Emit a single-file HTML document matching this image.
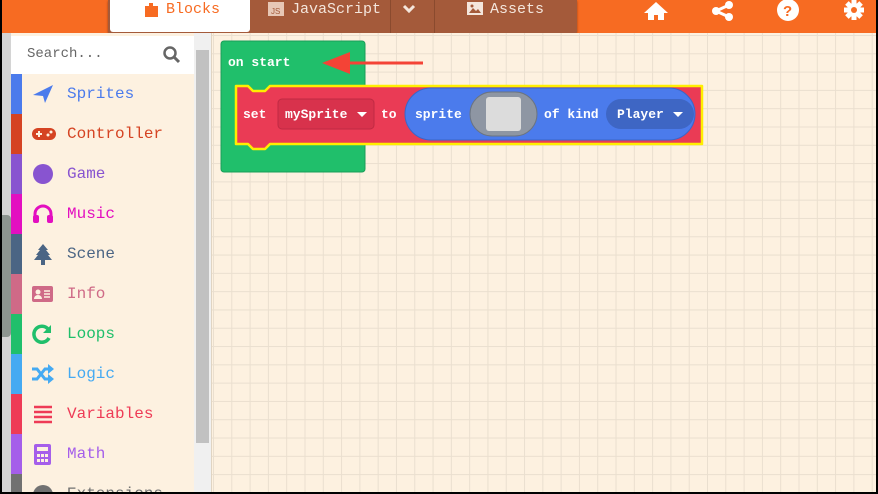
<!DOCTYPE html>
<html><head><meta charset="utf-8"><style>
*{margin:0;padding:0;box-sizing:border-box}
html,body{width:878px;height:494px;overflow:hidden}
body{background:#000;font-family:"Liberation Mono",monospace;position:relative}
.top{position:absolute;left:2px;top:0;width:874px;height:33px;background:#f76b22}
.tabs{position:absolute;left:108px;top:0;width:469px;height:34px;background:#a45a3a;border-radius:0 0 3px 3px;box-shadow:0 1px 2px rgba(0,0,0,.4)}
.blk{position:absolute;left:110px;top:0;width:140px;height:32px;background:#fff;border-radius:0 0 3px 3px;color:#f76b22;font-size:15px;line-height:20px;padding-left:56px}
.tab{position:absolute;top:0;color:#f4e6dc;font-size:15px;line-height:20px}
.div{position:absolute;top:0;width:1px;height:33px;background:#8a4a2e}
.left{position:absolute;left:2px;top:33px;width:9px;height:459px;background:#d4d4d4}
.handle{position:absolute;left:2px;top:215px;width:9px;height:122px;background:#8d9590;border-radius:0 4px 4px 0}
.tb{position:absolute;left:11px;top:33px;width:184px;height:459px;background:#fdf1e0}
.search{position:absolute;left:11px;top:36px;width:184px;height:38px;background:#fff;color:#666;font-size:14px;line-height:36px;padding-left:16px}
.cat{position:absolute;left:11px;width:184px;height:40px;font-size:16px;line-height:40px}
.cat .s{position:absolute;left:0;top:0;width:11px;height:40px}
.cat .t{position:absolute;left:56px}
.cat svg{position:absolute;left:21px;top:10px}
.track{position:absolute;left:194px;top:33px;width:17px;height:459px;background:#f0f0f0}
.thumb{position:absolute;left:196px;top:50px;width:13px;height:393px;background:#c1c1c1}
.ws{position:absolute;left:211px;top:33px;width:665px;height:459px;background-color:#fdf1e0;
background-image:linear-gradient(90deg,#eadfcf 1px,transparent 1px),linear-gradient(#eadfcf 1px,transparent 1px);background-size:18.3px 18.3px;background-position:1px 2px;border-left:1px solid #e0d4c2}
.w{color:#fff;font-weight:bold;font-size:13px;position:absolute}
</style></head><body>
<div class="top"></div>
<div class="tabs"></div>
<div class="blk"><svg style="position:absolute;left:35px;top:3px" width="13" height="14"><path d="M0 3h4V0h4v3h5v11H0z" fill="#f76b22"/></svg>Blocks</div>
<svg style="position:absolute;left:268px;top:2px" width="16" height="14"><rect width="16" height="14" fill="#e7c7b5"/><text x="3" y="12" font-size="8" fill="#a45a3a" font-family="Liberation Sans">JS</text></svg>
<div class="tab" style="left:291px">JavaScript</div>
<div class="div" style="left:390px"></div>
<svg style="position:absolute;left:402px;top:4px" width="14" height="10"><path d="M2 2l5 5 5-5" stroke="#f4e6dc" stroke-width="3" fill="none"/></svg>
<div class="div" style="left:434px"></div>
<svg style="position:absolute;left:467px;top:2px" width="16" height="13"><rect width="16" height="13" fill="#f4e6dc"/><path d="M2 11l4-5 3 3 2-2 3 4z" fill="#a45a3a"/><circle cx="5" cy="4" r="1.5" fill="#a45a3a"/></svg>
<div class="tab" style="left:490px">Assets</div>
<svg style="position:absolute;left:643px;top:1px" width="26" height="20"><path d="M13 1L1 12h4v7h6v-5h4v5h6v-7h4z" fill="#fff"/></svg>
<svg style="position:absolute;left:711px;top:1px" width="24" height="20"><circle cx="18" cy="4" r="4" fill="#fff"/><circle cx="5" cy="10" r="4" fill="#fff"/><circle cx="18" cy="16" r="4" fill="#fff"/><path d="M5 10L18 4M5 10l13 6" stroke="#fff" stroke-width="3"/></svg>
<svg style="position:absolute;left:776px;top:0px" width="24" height="22"><circle cx="12" cy="10" r="11" fill="#fff"/><text x="7" y="16" font-size="15" font-weight="bold" fill="#f76b22" font-family="Liberation Sans">?</text></svg>
<svg style="position:absolute;left:842px;top:0px" width="24" height="22"><g fill="#fff" transform="translate(12 10)"><rect x="-2.5" y="-10" width="5" height="20"/><rect x="-2.5" y="-10" width="5" height="20" transform="rotate(45)"/><rect x="-2.5" y="-10" width="5" height="20" transform="rotate(90)"/><rect x="-2.5" y="-10" width="5" height="20" transform="rotate(135)"/><circle r="7"/><circle r="3" fill="#f76b22"/></g></svg>

<div class="left"></div><div class="handle"></div>
<div class="tb"></div>
<div class="search">Search...<svg style="position:absolute;left:152px;top:10px" width="18" height="18"><circle cx="7" cy="7" r="5.5" stroke="#666" stroke-width="2.5" fill="none"/><path d="M11 11l5 5" stroke="#666" stroke-width="3"/></svg></div>

<div class="cat" style="top:74px;color:#4b7bec"><div class="s" style="background:#4b7bec"></div><svg width="22" height="20"><path d="M1 11L21 1 13 19 11 12z" fill="#4b7bec"/></svg><span class="t">Sprites</span></div>
<div class="cat" style="top:114px;color:#d54322"><div class="s" style="background:#d54322"></div><svg width="24" height="20"><rect x="0" y="4" width="24" height="12" rx="6" fill="#d54322"/><path d="M4 10h6M7 7v6" stroke="#fdf1e0" stroke-width="2"/><circle cx="16" cy="11" r="1.5" fill="#fdf1e0"/><circle cx="19" cy="8" r="1.5" fill="#fdf1e0"/></svg><span class="t">Controller</span></div>
<div class="cat" style="top:154px;color:#8854d0"><div class="s" style="background:#8854d0"></div><svg width="22" height="20"><circle cx="11" cy="10" r="10" fill="#8854d0"/></svg><span class="t">Game</span></div>
<div class="cat" style="top:194px;color:#e30fc0"><div class="s" style="background:#e30fc0"></div><svg width="22" height="20"><path d="M3 15v-5a8 8 0 0116 0v5" stroke="#e30fc0" stroke-width="3" fill="none"/><rect x="1" y="11" width="6" height="8" rx="2" fill="#e30fc0"/><rect x="15" y="11" width="6" height="8" rx="2" fill="#e30fc0"/></svg><span class="t">Music</span></div>
<div class="cat" style="top:234px;color:#4b6584"><div class="s" style="background:#4b6584"></div><svg width="22" height="22"><path d="M11 0l5 6h-2l4 5h-2l4 5H2l4-5H4l4-5H6z" fill="#4b6584"/><rect x="9" y="16" width="4" height="5" fill="#4b6584"/></svg><span class="t">Scene</span></div>
<div class="cat" style="top:274px;color:#cf6a87"><div class="s" style="background:#cf6a87"></div><svg width="22" height="20"><rect x="0" y="2" width="21" height="16" rx="2" fill="#cf6a87"/><circle cx="6" cy="8" r="2.5" fill="#fdf1e0"/><path d="M2 15a4 4 0 018 0z" fill="#fdf1e0"/><path d="M12 7h6M12 10h6M12 13h6" stroke="#fdf1e0" stroke-width="1.5"/></svg><span class="t">Info</span></div>
<div class="cat" style="top:314px;color:#20bf6b"><div class="s" style="background:#20bf6b"></div><svg width="22" height="22"><path d="M17 14a8 8 0 11-1-9" stroke="#20bf6b" stroke-width="3.5" fill="none"/><path d="M19 1v8h-8z" fill="#20bf6b"/></svg><span class="t">Loops</span></div>
<div class="cat" style="top:354px;color:#45aaf2"><div class="s" style="background:#45aaf2"></div><svg width="22" height="20"><path d="M0 5h5l8 10h4M0 15h5l8-10h4" stroke="#45aaf2" stroke-width="3" fill="none"/><path d="M16 0l6 5-6 5zM16 10l6 5-6 5z" fill="#45aaf2"/></svg><span class="t">Logic</span></div>
<div class="cat" style="top:394px;color:#ee3b56"><div class="s" style="background:#ee3b56"></div><svg width="22" height="20"><path d="M2 3h18M2 8h18M2 13h18M2 18h18" stroke="#ee3b56" stroke-width="2.5"/></svg><span class="t">Variables</span></div>
<div class="cat" style="top:434px;color:#a55eea"><div class="s" style="background:#a55eea"></div><svg width="22" height="22"><rect x="2" y="0" width="17" height="21" rx="2" fill="#a55eea"/><rect x="5" y="3" width="11" height="4" fill="#fdf1e0"/><path d="M5 10h3v3H5zM9 10h3v3H9zM13 10h3v3h-3zM5 15h3v3H5zM9 15h3v3H9zM13 15h3v3h-3z" fill="#fdf1e0"/></svg><span class="t">Math</span></div>
<div class="cat" style="top:474px;height:18px;overflow:hidden;color:#717171"><div class="s" style="background:#717171"></div><svg width="22" height="22"><circle cx="11" cy="11" r="10" fill="#717171"/></svg><span class="t">Extensions</span></div>

<div class="track"></div><div class="thumb"></div>
<div class="ws"></div>

<svg style="position:absolute;left:0;top:0" width="878" height="494">
<rect x="221" y="41" width="144" height="131" rx="3" fill="#20bf6b" stroke="#1a9e58"/>
<path d="M236 86h12l5 5h12l5-5h432v58H270l-5 5h-12l-5-5h-12z" fill="#ea3b55" stroke="#ffee00" stroke-width="2.5" stroke-linejoin="round"/>
<rect x="278" y="99" width="96" height="30" rx="4" fill="#d8324c" stroke="#c02a43"/>
<rect x="405" y="88" width="290" height="52" rx="26" fill="#4b7bec" stroke="#3a66c8"/>
<rect x="470" y="92" width="67" height="44" rx="22" fill="#8e96a3" stroke="#6b7480"/>
<rect x="486" y="97" width="35" height="34" rx="3" fill="#dcdcdc"/>
<rect x="606" y="99" width="88" height="30" rx="15" fill="#3e66c4"/>
<path d="M325 63h98" stroke="#f44336" stroke-width="3"/><path d="M322 63l28-11v22z" fill="#f44336"/>
<path d="M357 112h10l-5 5z M673 112h10l-5 5z" fill="#fff"/>
</svg>
<div class="w" style="left:228px;top:55px">on start</div>
<div class="w" style="left:243px;top:107px">set</div>
<div class="w" style="left:285px;top:107px">mySprite</div>
<div class="w" style="left:381px;top:107px">to</div>
<div class="w" style="left:415px;top:107px">sprite</div>
<div class="w" style="left:544px;top:107px">of kind</div>
<div class="w" style="left:617px;top:107px">Player</div>
</body></html>
